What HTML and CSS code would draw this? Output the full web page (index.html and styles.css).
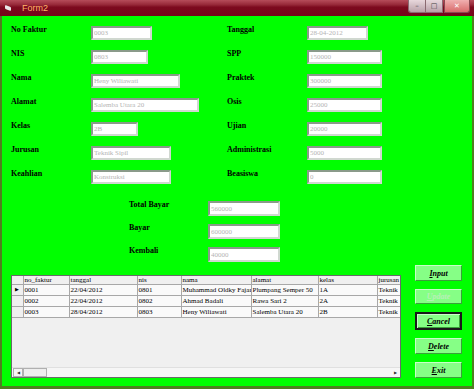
FILE: index.html
```html
<!DOCTYPE html>
<html lang="id">
<head>
  <meta charset="UTF-8">
  <title>Form2</title>
  <link rel="stylesheet" href="styles.css">
</head>
<body>
  <div class="window">
    <div class="titlebar">
      <span class="app-icon"></span>
      <span class="title">Form2</span>
      <div class="caption-buttons">
        <span class="cap-group">
          <span class="cap">&#8211;</span>
          <span class="cap">&#9633;</span>
        </span>
        <span class="cap close">&#10005;</span>
      </div>
    </div>

    <div class="client">
      <div class="form">
        <div class="row">
          <label>No Faktur</label>
          <input class="w61" value="0003">
          <label>Tanggal</label>
          <input class="w61" value="28-04-2012">
        </div>
        <div class="row r2">
          <label>NIS</label>
          <input class="w57" value="0803">
          <label>SPP</label>
          <input class="w75" value="150000">
        </div>
        <div class="row">
          <label>Nama</label>
          <input class="w89" value="Heny Wiliawati">
          <label>Praktek</label>
          <input class="w75" value="300000">
        </div>
        <div class="row">
          <label>Alamat</label>
          <input class="w108" value="Salemba Utara 20">
          <label>Osis</label>
          <input class="w75" value="25000">
        </div>
        <div class="row">
          <label>Kelas</label>
          <input class="w47" value="2B">
          <label>Ujian</label>
          <input class="w75" value="20000">
        </div>
        <div class="row">
          <label>Jurusan</label>
          <input class="w80" value="Teknik Sipil">
          <label>Administrasi</label>
          <input class="w75" value="5000">
        </div>
        <div class="row">
          <label>Keahlian</label>
          <input class="w80" value="Konstruksi">
          <label>Beasiswa</label>
          <input class="w75" value="0">
        </div>
      </div>

      <div class="pay">
        <div class="pay-row">
          <label>Total Bayar</label>
          <input class="w72" value="560000">
        </div>
        <div class="pay-row">
          <label>Bayar</label>
          <input class="w72" value="600000">
        </div>
        <div class="pay-row">
          <label>Kembali</label>
          <input class="w72" value="40000">
        </div>
      </div>

      <div class="bottom">
        <div class="grid">
          <div class="grid-body">
            <table>
              <colgroup>
                <col style="width:11px">
                <col style="width:46px">
                <col style="width:68px">
                <col style="width:44px">
                <col style="width:70px">
                <col style="width:67px">
                <col style="width:59px">
                <col style="width:40px">
              </colgroup>
              <thead>
                <tr>
                  <th></th><th>no_faktur</th><th>tanggal</th><th>nis</th><th>nama</th><th>alamat</th><th>kelas</th><th>jurusan</th>
                </tr>
              </thead>
              <tbody>
                <tr>
                  <td class="ind">&#9654;</td><td>0001</td><td>22/04/2012</td><td>0801</td><td>Muhammad Oldky Fajar</td><td>Plumpang Semper 50</td><td>1A</td><td>Teknik</td>
                </tr>
                <tr>
                  <td class="ind"></td><td>0002</td><td>22/04/2012</td><td>0802</td><td>Ahmad Badali</td><td>Rawa Sari 2</td><td>2A</td><td>Teknik</td>
                </tr>
                <tr>
                  <td class="ind"></td><td>0003</td><td>28/04/2012</td><td>0803</td><td>Heny Wiliawati</td><td>Salemba Utara 20</td><td>2B</td><td>Teknik</td>
                </tr>
              </tbody>
            </table>
          </div>
          <div class="hscroll">
            <span class="arrow">&#9664;</span>
            <span class="thumb"></span>
            <span class="track"></span>
            <span class="arrow right">&#9654;</span>
          </div>
        </div>

        <div class="buttons">
          <button><u>I</u>nput</button>
          <button class="disabled"><u>U</u>pdate</button>
          <button class="focused"><u>C</u>ancel</button>
          <button><u>D</u>elete</button>
          <button><u>E</u>xit</button>
        </div>
      </div>
    </div>
  </div>
</body>
</html>
```

FILE: styles.css
```css
body {
  margin: 0;
  font-family: 'Liberation Serif', 'Times New Roman', serif;
  background: #4f7f1f;
}

.window {
  width: 474px;
  height: 389px;
  box-sizing: border-box;
  background: #4f7f1f;
  padding: 0 2px 3px 2px;
  display: flex;
  flex-direction: column;
}

.titlebar {
  height: 16px;
  margin: 0 -2px;
  background: linear-gradient(#b64c5a 0%, #962838 30%, #7c0a1e 45%, #76061a 100%);
  display: flex;
  align-items: center;
  padding-left: 5px;
}

.app-icon {
  width: 6px;
  height: 4px;
  background: #e8e8e8;
  border-radius: 1px;
  transform: skewY(20deg);
}

.title {
  color: #ffb468;
  font-family: 'Liberation Sans', Arial, sans-serif;
  font-size: 9px;
  margin-left: 11px;
}

.caption-buttons {
  margin-left: auto;
  margin-right: 4px;
  display: flex;
  gap: 1px;
  align-self: flex-start;
}

.cap-group {
  display: flex;
  border: 1px solid #8a6a70;
  border-top: none;
  border-radius: 0 0 0 3px;
  overflow: hidden;
}

.cap {
  width: 16px;
  height: 12px;
  background: linear-gradient(#e8d8dc, #b8a0a8);
  color: #404040;
  font-size: 7px;
  font-family: 'DejaVu Sans', sans-serif;
  display: flex;
  align-items: center;
  justify-content: center;
}

.cap + .cap {
  border-left: 1px solid #8a6a70;
}

.cap.close {
  width: 24px;
  background: linear-gradient(#f0b0b0, #d86a6a);
  color: #fff;
  border: 1px solid #8a4a50;
  border-top: none;
  border-radius: 0 0 3px 0;
}

.client {
  flex: 1;
  background: #00ff00;
  padding-left: 9px;
  padding-top: 10px;
}

.form .row {
  display: grid;
  grid-template-columns: 80px 136px 80px auto;
  height: 14px;
  margin-bottom: 10px;
}

.form .row.r2 {
  margin-top: 4px;
}

label {
  font-size: 8px;
  font-weight: bold;
  color: #000;
  line-height: 10px;
  margin-top: -1px;
}

input {
  box-sizing: border-box;
  height: 14px;
  border: 2px solid #8a9a8a;
  border-right-color: #d0d8d0;
  border-bottom-color: #d0d8d0;
  background: #fff;
  font-family: 'Liberation Serif', serif;
  font-size: 7px;
  color: #b4b4b4;
  padding: 0 1px;
  outline: none;
}

.w47 { width: 47px; }
.w57 { width: 57px; }
.w61 { width: 61px; }
.w72 { width: 72px; }
.w75 { width: 75px; }
.w80 { width: 80px; }
.w89 { width: 89px; }
.w108 { width: 108px; }

.pay {
  padding-left: 118px;
  margin-top: 17px;
}

.pay-row {
  display: grid;
  grid-template-columns: 79px auto;
  height: 15px;
  margin-bottom: 8px;
}

.pay-row input {
  height: 15px;
}

.bottom {
  display: flex;
  align-items: flex-start;
  gap: 14px;
  margin-top: -5px;
}

.grid {
  margin-top: 10px;
  width: 390px;
  height: 103px;
  box-sizing: border-box;
  border: 1px solid #6a6a6a;
  background: #f0f0f0;
  display: flex;
  flex-direction: column;
  overflow: hidden;
}

.grid-body {
  flex: 1;
  overflow: hidden;
}

table {
  border-collapse: collapse;
  table-layout: fixed;
  width: 405px;
  font-size: 7px;
}

th, td {
  border: 1px solid #a8a8a8;
  padding: 0 1px;
  white-space: nowrap;
  overflow: hidden;
  text-align: left;
  font-weight: normal;
}

th {
  height: 8px;
  line-height: 8px;
  background: #f0f0f0;
  border-top: none;
}

td {
  height: 10px;
  line-height: 10px;
  background: #fafafa;
}

th:first-child, td.ind {
  border-left: none;
  background: #f0f0f0;
}

td.ind {
  font-size: 5px;
  text-align: center;
  color: #000;
}

.hscroll {
  height: 9px;
  display: flex;
  background: #f6f6f6;
  border-top: 1px solid #e0e0e0;
}

.hscroll .arrow {
  width: 10px;
  font-size: 4px;
  display: flex;
  align-items: center;
  justify-content: center;
  border: 1px solid #b0b0b0;
  box-sizing: border-box;
  margin-left: 1px;
  color: #303030;
}

.hscroll .arrow.right {
  border: none;
}

.hscroll .thumb {
  width: 24px;
  border: 1px solid #b0b0b0;
  box-sizing: border-box;
  background: #eeeeee;
}

.hscroll .track {
  flex: 1;
}

.buttons {
  display: flex;
  flex-direction: column;
  gap: 8px;
}

button {
  width: 47px;
  height: 16px;
  padding: 0;
  background: #86ff86;
  border: 1px solid;
  border-color: #c8ffc8 #3aa03a #3aa03a #c8ffc8;
  font-family: 'Liberation Serif', serif;
  font-size: 8px;
  font-weight: bold;
  font-style: italic;
  color: #000;
}

button.disabled {
  color: #b8f0b8;
  height: 15px;
}

button.focused {
  height: 18px;
  border: 2px solid #1a1a1a;
  box-shadow: inset 1px 1px 0 #c8ffc8, inset -1px -1px 0 #3aa03a;
}
```
